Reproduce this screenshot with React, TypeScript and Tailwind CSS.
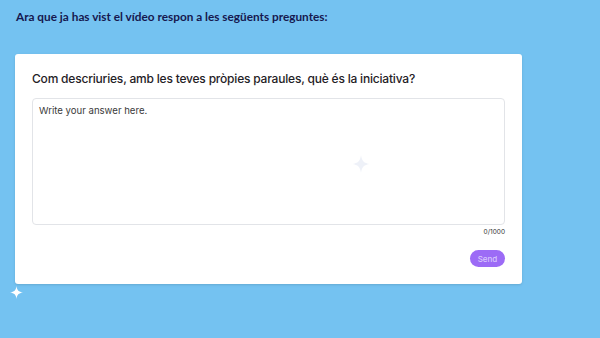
import React from 'react';

function Sparkle({ className }: { className?: string }) {
  return (
    <svg viewBox="0 0 24 24" className={className} fill="currentColor">
      <path d="M12 0 C13 8 16 11 24 12 C16 13 13 16 12 24 C11 16 8 13 0 12 C8 11 11 8 12 0 Z" />
    </svg>
  );
}

export default function App() {
  return (
    <div className="w-[600px] h-[338px] bg-[#74c2f1] overflow-hidden font-['Lato',sans-serif]">
      <div className="pl-4 pt-[10px] pb-[30px]">
        <h1 className="text-[11.8px] leading-[14px] font-bold text-[#16184f]">
          Ara que ja has vist el vídeo respon a les següents preguntes:
        </h1>
      </div>
      <div className="ml-[15px] w-[507px] h-[230px] bg-white rounded-[3px] shadow-sm px-[17px] pt-[16px]">
        <h2 className="text-[12px] leading-[18px] font-medium tracking-[-0.2px] text-[#1f2126] font-['Inter',sans-serif]">
          Com descriuries, amb les teves pròpies paraules, què és la iniciativa?
        </h2>
        <div className="relative mt-[10px] h-[127px] border border-[#e2e4e8] rounded-[4px] px-[6px] py-[5px]">
          <p className="text-[9.6px] leading-[14px] text-[#3a3a3a] font-['Inter',sans-serif]">
            Write your answer here.
          </p>
          <Sparkle className="absolute left-[319px] top-[56px] w-[18px] h-[18px] text-[#eef1f8]" />
        </div>
        <div className="flex justify-end mt-[2px]">
          <span className="text-[6.5px] leading-[10px] text-[#333] font-['Inter',sans-serif]">0/1000</span>
        </div>
        <div className="flex justify-end mt-[13px]">
          <button className="w-[35px] h-[17px] rounded-full bg-[#9c6bf6] text-[#d9c8fc] text-[8px] font-['Inter',sans-serif] font-medium">
            Send
          </button>
        </div>
      </div>
      <Sparkle className="ml-[10px] mt-[2px] w-[13px] h-[13px] text-white" />
    </div>
  );
}
